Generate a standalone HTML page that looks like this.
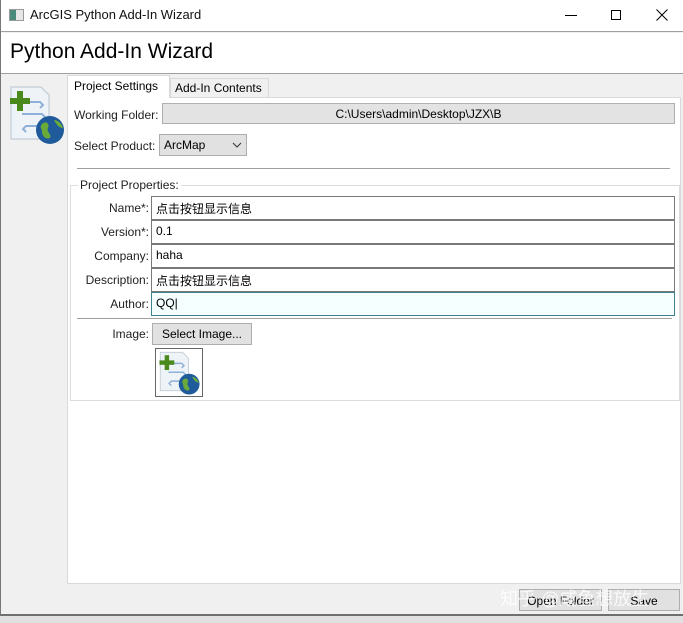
<!DOCTYPE html>
<html><head><meta charset="utf-8"><style>
*{box-sizing:border-box;margin:0;padding:0}
body{width:683px;height:623px;overflow:hidden;background:#f0f0f0;font-family:"Liberation Sans","Noto Sans CJK SC",sans-serif;font-size:12px;color:#000;position:relative}
.a{position:absolute}
.lbl{position:absolute;text-align:right;font-size:12px;color:#222}
.inp{position:absolute;left:151px;width:524px;height:24px;background:#fff;border:1px solid #7a7a7a;padding:3px 4px;font-size:12px}
.btn{position:absolute;background:#e1e1e1;border:1px solid #adadad;font-size:12px;text-align:center}
</style></head><body>
<!-- title bar -->
<div class="a" style="left:0;top:0;width:683px;height:32px;background:#fff;border-bottom:1px solid #a0a0a0"></div>
<div class="a" style="left:9px;top:9px;width:15px;height:12px;background:#e6e6e6;border:1px solid #999"><div style="width:6px;height:10px;background:#4a8a7a"></div></div>
<div class="a" style="left:30px;top:7px;font-size:13px;color:#111">ArcGIS Python Add-In Wizard</div>
<div class="a" style="left:565px;top:15px;width:12px;height:1px;background:#000"></div>
<div class="a" style="left:611px;top:10px;width:10px;height:10px;border:1px solid #000"></div>
<svg class="a" style="left:656px;top:9px" width="12" height="12"><path d="M0.5 0.5L11.5 11.5M11.5 0.5L0.5 11.5" stroke="#000" stroke-width="1"/></svg>
<!-- header -->
<div class="a" style="left:0;top:33px;width:683px;height:41px;background:#fff;border-bottom:1px solid #a0a0a0"></div>
<div class="a" style="left:10px;top:40px;font-size:21px;color:#000">Python Add-In Wizard</div>
<!-- left icon -->
<svg class="a" style="left:8px;top:84px" width="58" height="62" viewBox="0 0 58 62">
<path d="M3 3h30l8 8v44H3z" fill="#eef3f8" stroke="#b8c4d0"/>
<path d="M14 18h18l3 3-3 3M14 30h20l3 3-3 3M34 42H18l-3 3 3 3" fill="none" stroke="#8fb0d8" stroke-width="2"/>
<rect x="2" y="14" width="20" height="6" fill="#4a8a1c"/><rect x="9" y="7" width="6" height="20" fill="#4a8a1c"/>
<circle cx="42" cy="46" r="14" fill="#1f5a9a"/><path d="M34 40c4-4 8 0 6 4s4 6 2 10c-4 2-8-2-8-6s-3-4 0-8zM46 36c4 0 8 4 9 8-3 0-6-2-9-8z" fill="#6aaa3a"/>
</svg>
<!-- tabs -->
<div class="a" style="left:170px;top:78px;width:99px;height:20px;background:#f0f0f0;border:1px solid #d9d9d9;border-bottom:none;padding:2px 4px;font-size:12px">Add-In Contents</div>
<div class="a" style="left:67px;top:97px;width:614px;height:487px;background:#fff;border:1px solid #d9d9d9"></div>
<div class="a" style="left:67px;top:75px;width:103px;height:23px;background:#fff;border:1px solid #d9d9d9;border-bottom:none;padding:3px 6px;font-size:12px">Project Settings</div>
<!-- working folder -->
<div class="lbl" style="left:74px;top:108px">Working Folder:</div>
<div class="a" style="left:162px;top:103px;width:513px;height:21px;background:#e3e3e3;border:1px solid #b0b0b0;text-align:center;padding-top:3px;font-size:12px">C:\Users\admin\Desktop\JZX\B</div>
<div class="lbl" style="left:74px;top:139px">Select Product:</div>
<div class="a" style="left:159px;top:134px;width:88px;height:22px;background:#e1e1e1;border:1px solid #adadad;padding:3px 4px;font-size:12px">ArcMap</div>
<svg class="a" style="left:232px;top:142px" width="10" height="6"><path d="M1 1l4 4 4-4" fill="none" stroke="#333"/></svg>
<div class="a" style="left:77px;top:168px;width:593px;height:1px;background:#a0a0a0"></div>
<!-- group -->
<div class="a" style="left:70px;top:185px;width:610px;height:216px;border:1px solid #dcdcdc"></div>
<div class="a" style="left:78px;top:178px;background:#fff;padding:0 2px;font-size:12px;color:#222">Project Properties:</div>
<div class="lbl" style="right:534px;top:201px">Name*:</div>
<div class="lbl" style="right:534px;top:225px">Version*:</div>
<div class="lbl" style="right:534px;top:249px">Company:</div>
<div class="lbl" style="right:534px;top:273px">Description:</div>
<div class="lbl" style="right:534px;top:297px">Author:</div>
<div class="inp" style="top:196px">点击按钮显示信息</div>
<div class="inp" style="top:220px">0.1</div>
<div class="inp" style="top:244px">haha</div>
<div class="inp" style="top:268px">点击按钮显示信息</div>
<div class="inp" style="top:292px;border-color:#3f7f8f;background:#f6ffff">QQ|</div>
<div class="a" style="left:77px;top:318px;width:595px;height:1px;background:#a0a0a0"></div>
<div class="lbl" style="right:534px;top:327px">Image:</div>
<div class="btn" style="left:152px;top:323px;width:100px;height:22px;padding-top:3px">Select Image...</div>
<div class="a" style="left:155px;top:348px;width:48px;height:49px;border:1px solid #666;background:#fff"></div>
<svg class="a" style="left:157px;top:350px" width="45" height="46" viewBox="0 0 58 62">
<path d="M3 3h30l8 8v44H3z" fill="#eef3f8" stroke="#b8c4d0"/>
<path d="M14 18h18l3 3-3 3M14 30h20l3 3-3 3M34 42H18l-3 3 3 3" fill="none" stroke="#8fb0d8" stroke-width="2"/>
<rect x="2" y="14" width="20" height="6" fill="#4a8a1c"/><rect x="9" y="7" width="6" height="20" fill="#4a8a1c"/>
<circle cx="42" cy="46" r="14" fill="#1f5a9a"/><path d="M34 40c4-4 8 0 6 4s4 6 2 10c-4 2-8-2-8-6s-3-4 0-8zM46 36c4 0 8 4 9 8-3 0-6-2-9-8z" fill="#6aaa3a"/>
</svg>
<!-- bottom buttons -->
<div class="btn" style="left:519px;top:589px;width:83px;height:22px;padding-top:4px">Open Folder</div>
<div class="btn" style="left:608px;top:589px;width:72px;height:22px;padding-top:4px">Save</div>
<div class="a" style="left:500px;top:585px;font-size:18px;color:rgba(255,255,255,0.8)">知乎 @咸鱼想放生</div>
<!-- window bottom border -->
<div class="a" style="left:0;top:614px;width:683px;height:2px;background:#6f6f6f"></div>
<div class="a" style="left:0;top:616px;width:683px;height:7px;background:#e0e0e0"></div>
<div class="a" style="left:0;top:0;width:1px;height:615px;background:#777"></div>
</body></html>
